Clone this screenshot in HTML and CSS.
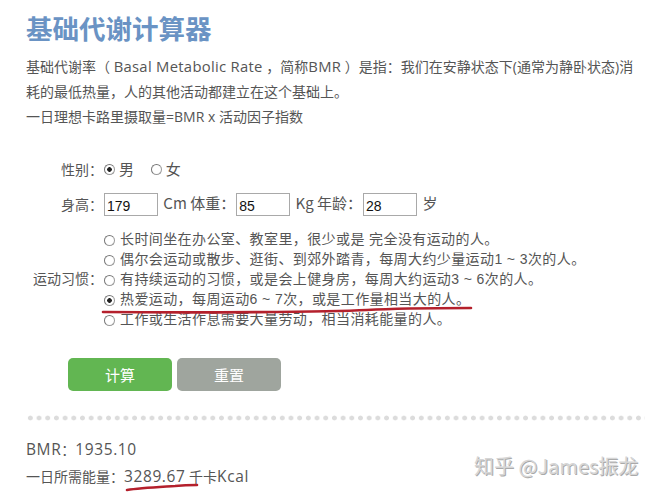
FILE: index.html
```html
<!DOCTYPE html>
<html lang="zh-CN">
<head>
    <meta charset="UTF-8">
    <title>基础代谢计算器</title>
    <link rel="stylesheet" href="styles.css">
</head>
<body>
    <h1>基础代谢计算器</h1>
    <p class="intro">
        基础代谢率（ <span class="en">Basal Metabolic Rate</span> ，简称<span class="en">BMR</span> ）是指：我们在安静状态下(通常为静卧状态)消<br>
        耗的最低热量，人的其他活动都建立在这个基础上。<br>
        一日理想卡路里摄取量=BMR x 活动因子指数
    </p>

    <div class="form">
        <div class="row row-sex">
            <span class="label">性别：</span>
            <div class="field">
                <label class="opt"><input type="radio" name="sex" checked>男</label>
                <label class="opt"><input type="radio" name="sex">女</label>
            </div>
        </div>
        <div class="row row-size">
            <span class="label">身高：</span>
            <div class="field">
                <input class="num" type="text" value="179"> Cm 体重：<input class="num" type="text" value="85"> Kg 年龄：<input class="num" type="text" value="28"> 岁
            </div>
        </div>
        <div class="row row-act">
            <span class="label">运动习惯：</span>
            <div class="field acts">
                <label class="act"><input type="radio" name="act">长时间坐在办公室、教室里，很少或是 完全没有运动的人。</label>
                <label class="act"><input type="radio" name="act">偶尔会运动或散步、逛街、到郊外踏青，每周大约少量运动1 ~ 3次的人。</label>
                <label class="act"><input type="radio" name="act">有持续运动的习惯，或是会上健身房，每周大约运动3 ~ 6次的人。</label>
                <label class="act"><input type="radio" name="act" checked>热爱运动，每周运动6 ~ 7次，或是工作量相当大的人。</label>
                <label class="act"><input type="radio" name="act">工作或生活作息需要大量劳动，相当消耗能量的人。</label>
            </div>
        </div>
    </div>

    <div class="buttons">
        <button class="btn btn-calc">计算</button>
        <button class="btn btn-reset">重置</button>
    </div>

    <div class="dots"></div>

    <div class="result">
        <p><span class="val">BMR</span>：<span class="val">1935.10</span></p>
        <p>一日所需能量：<span class="val">3289.67</span> 千卡<span class="val">Kcal</span></p>
    </div>

    <!-- hand drawn marks over the screenshot -->
    <svg class="marks" width="655" height="493" viewBox="0 0 655 493">
        <path d="M103 312 C 200 313, 330 312, 367 310 C 400 308, 440 308, 471 308" />
        <path d="M127 490 C 140 488, 160 487, 175 486 C 185 485, 192 485, 197 485" />
    </svg>

    <div class="watermark">知乎 @James振龙</div>
</body>
</html>
```

FILE: styles.css
```css
body {
    margin: 0;
    padding: 0 10px 0 26px;
    font-family: "Open Sans", "Noto Sans CJK SC", sans-serif;
    font-size: 14px;
    color: #555;
    background: #fff;
}

h1 {
    margin: 11px 0 0;
    font-family: "Noto Sans CJK SC", sans-serif;
    font-size: 26.5px;
    line-height: 34px;
    color: #6a93c4;
    font-weight: bold;
}

.intro {
    margin: 9px 0 0;
    line-height: 25px;
}

.intro .en {
    font-size: 14.8px;
    letter-spacing: 0.3px;
}

.form {
    margin-top: 29px;
}

.row {
    display: grid;
    grid-template-columns: 77px 1fr;
    align-items: center;
}

.label {
    text-align: right;
    font-family: "Noto Sans CJK SC", sans-serif;
}

.row-sex {
    height: 20px;
}

.row-size {
    margin-top: 13px;
    height: 26px;
}

.row-act {
    margin-top: 11px;
}

.opt {
    display: inline-flex;
    align-items: center;
    margin-right: 12px;
    font-size: 15px;
}

.opt input {
    margin: 2px 4px 0 1px;
}

.num {
    width: 54px;
    height: 23px;
    box-sizing: border-box;
    border: 1px solid #a9a9a9;
    padding: 2px 2px 0;
    font-family: "Liberation Sans", Arial, sans-serif;
    font-size: 14px;
    color: #111;
    vertical-align: middle;
    margin: 0 2px 0 1px;
}

.row-size .field {
    font-family: "Noto Sans CJK SC", sans-serif;
    font-size: 15px;
}

.acts {
    display: flex;
    flex-direction: column;
}

.act {
    display: flex;
    align-items: center;
    height: 20px;
    font-family: "Liberation Sans", "Noto Sans CJK SC", sans-serif;
    font-size: 14px;
    letter-spacing: 0.4px;
}

.act input {
    margin: 4px 5px 0 1px;
}

input[type="radio"] {
    appearance: none;
    -webkit-appearance: none;
    width: 11px;
    height: 11px;
    border: 1px solid #9a9a9a;
    border-top-color: #777;
    border-left-color: #777;
    border-radius: 50%;
    background: #fff;
    flex-shrink: 0;
}

input[type="radio"]:checked {
    background: radial-gradient(circle, #222 0, #222 2px, #fff 2.6px);
}

.buttons {
    display: flex;
    gap: 5px;
    margin: 30px 0 0 42px;
}

.btn {
    width: 104px;
    height: 33px;
    border: none;
    border-radius: 5px;
    color: #fff;
    font-family: "Noto Sans CJK SC", sans-serif;
    font-size: 15px;
}

.btn-calc {
    background: #62b652;
}

.btn-reset {
    background: #9fa59e;
}

.dots {
    margin-top: 24px;
    width: 619px;
    height: 6px;
    background: radial-gradient(circle, #dcdcdc 0, #dcdcdc 2px, transparent 2.8px) 0 0 / 8.7px 6px repeat-x;
}

.result {
    margin-top: 16px;
}

.result p {
    margin: 0 0 2px;
    line-height: 25px;
    font-size: 14px;
}

.result .val {
    font-size: 15.5px;
    letter-spacing: 0.6px;
}

.marks {
    position: absolute;
    top: 0;
    left: 0;
    pointer-events: none;
}

.marks path {
    fill: none;
    stroke: #b4202c;
    stroke-width: 2.6;
    stroke-linecap: round;
}

.watermark {
    position: absolute;
    left: 474px;
    top: 451px;
    font-family: "Noto Sans CJK SC", sans-serif;
    font-size: 20px;
    color: #d6d6d6;
    text-shadow: 1px 1px 0 #aaa;
}
```
